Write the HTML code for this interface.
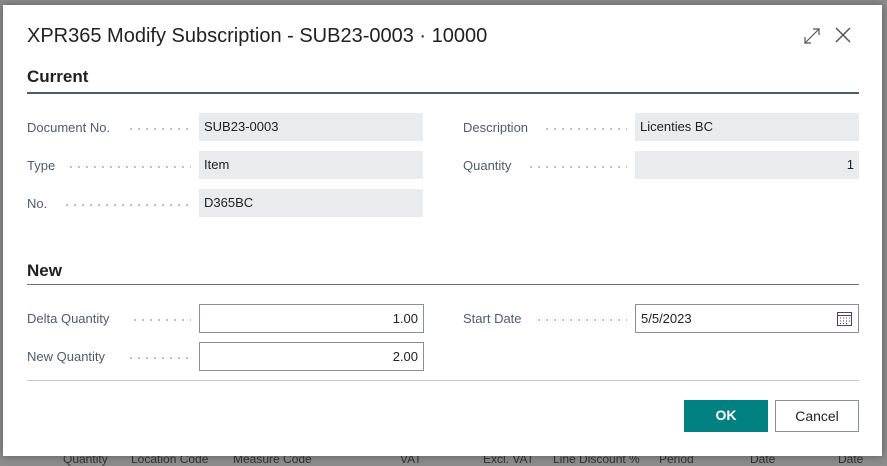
<!DOCTYPE html>
<html><head><style>
body{margin:0;width:887px;height:462px;overflow:hidden;background:#8c8c8c;font-family:"Segoe UI","Liberation Sans",sans-serif;position:relative}
.bg{position:absolute;font-size:12px;color:#333;top:452px}
.dlg{position:absolute;left:3px;top:5px;width:879px;height:451px;background:#fff;box-shadow:0 0 8px rgba(0,0,0,.35)}
.t{position:absolute;left:24px;top:20px;font-size:20px;color:#212121}
.h{position:absolute;left:24px;font-size:17px;color:#212121;font-weight:600}
.ln{position:absolute;left:24px;width:832px;height:2px;background:#505c6d}
.lab{position:absolute;font-size:13px;color:#505c6d;white-space:nowrap}
.dots{position:absolute;height:2px;background-image:radial-gradient(circle,#aaa 0.8px,transparent 1px);background-size:8px 2px}
.ro{position:absolute;height:28px;background:#eaebec;font-size:13px;color:#212121;line-height:28px;padding:0 5px;box-sizing:border-box}
.in{position:absolute;height:29px;border:1px solid #8a8f96;font-size:13px;color:#212121;line-height:27px;padding:0 5px;box-sizing:border-box}
.btn{position:absolute;top:395px;height:32px;width:84px;font-size:14px;text-align:center;line-height:30px;box-sizing:border-box}
</style></head><body>
<div class="bg" style="left:63px">Quantity</div><div class="bg" style="left:131px">Location Code</div><div class="bg" style="left:233px">Measure Code</div><div class="bg" style="left:400px">VAT</div><div class="bg" style="left:483px">Excl. VAT</div><div class="bg" style="left:553px">Line Discount %</div><div class="bg" style="left:659px">Period</div><div class="bg" style="left:750px">Date</div><div class="bg" style="left:838px">Date</div>
<div class="dlg">
<div class="t">XPR365 Modify Subscription - SUB23-0003 · 10000</div>
<svg style="position:absolute;left:800px;top:22px" width="18" height="18" viewBox="0 0 18 18" fill="none" stroke="#555" stroke-width="1.2"><path d="M2 16L16 2M10 2h6v6M2 10v6h6"/></svg>
<svg style="position:absolute;left:831px;top:21px" width="18" height="18" viewBox="0 0 18 18" fill="none" stroke="#555" stroke-width="1.5"><path d="M2 2L16 16M16 2L2 16"/></svg>
<div class="h" style="top:62px">Current</div><div class="ln" style="top:87px"></div>
<div class="lab" style="left:24px;top:115px">Document No.</div><div class="dots" style="left:124px;top:123px;width:64px"></div>
<div class="ro" style="left:196px;top:108px;width:224px">SUB23-0003</div>
<div class="lab" style="left:24px;top:153px">Type</div><div class="dots" style="left:64px;top:161px;width:124px"></div>
<div class="ro" style="left:196px;top:146px;width:224px">Item</div>
<div class="lab" style="left:24px;top:191px">No.</div><div class="dots" style="left:60px;top:199px;width:128px"></div>
<div class="ro" style="left:196px;top:184px;width:224px">D365BC</div>
<div class="lab" style="left:460px;top:115px">Description</div><div class="dots" style="left:540px;top:123px;width:84px"></div>
<div class="ro" style="left:632px;top:108px;width:224px">Licenties BC</div>
<div class="lab" style="left:460px;top:153px">Quantity</div><div class="dots" style="left:524px;top:161px;width:100px"></div>
<div class="ro" style="left:632px;top:146px;width:224px;text-align:right">1</div>
<div class="h" style="top:256px">New</div><div class="ln" style="top:279px;height:1px;background:#6b7380"></div>
<div class="lab" style="left:24px;top:306px">Delta Quantity</div><div class="dots" style="left:128px;top:314px;width:60px"></div>
<div class="in" style="left:196px;top:299px;width:225px;text-align:right">1.00</div>
<div class="lab" style="left:24px;top:344px">New Quantity</div><div class="dots" style="left:124px;top:352px;width:64px"></div>
<div class="in" style="left:196px;top:337px;width:225px;text-align:right">2.00</div>
<div class="lab" style="left:460px;top:306px">Start Date</div><div class="dots" style="left:532px;top:314px;width:92px"></div>
<div class="in" style="left:632px;top:299px;width:224px">5/5/2023
<svg style="position:absolute;right:6px;top:6px" width="15" height="15" viewBox="0 0 15 15" fill="none" stroke="#5a3a6a" stroke-width="1"><rect x="0.5" y="1.5" width="14" height="13"/><path d="M0.5 4.5h14M3 7h1M6 7h1M9 7h1M12 7h1M3 10h1M6 10h1M9 10h1M12 10h1M3 12.5h1M6 12.5h1M9 12.5h1"/></svg></div>
<div style="position:absolute;left:24px;top:375px;width:832px;height:1px;background:#c8c8c8"></div>
<div class="btn" style="left:681px;background:#008080;color:#fff;font-weight:700">OK</div>
<div class="btn" style="left:772px;border:1px solid #8a8f96;color:#212121">Cancel</div>
</div>
</body></html>
